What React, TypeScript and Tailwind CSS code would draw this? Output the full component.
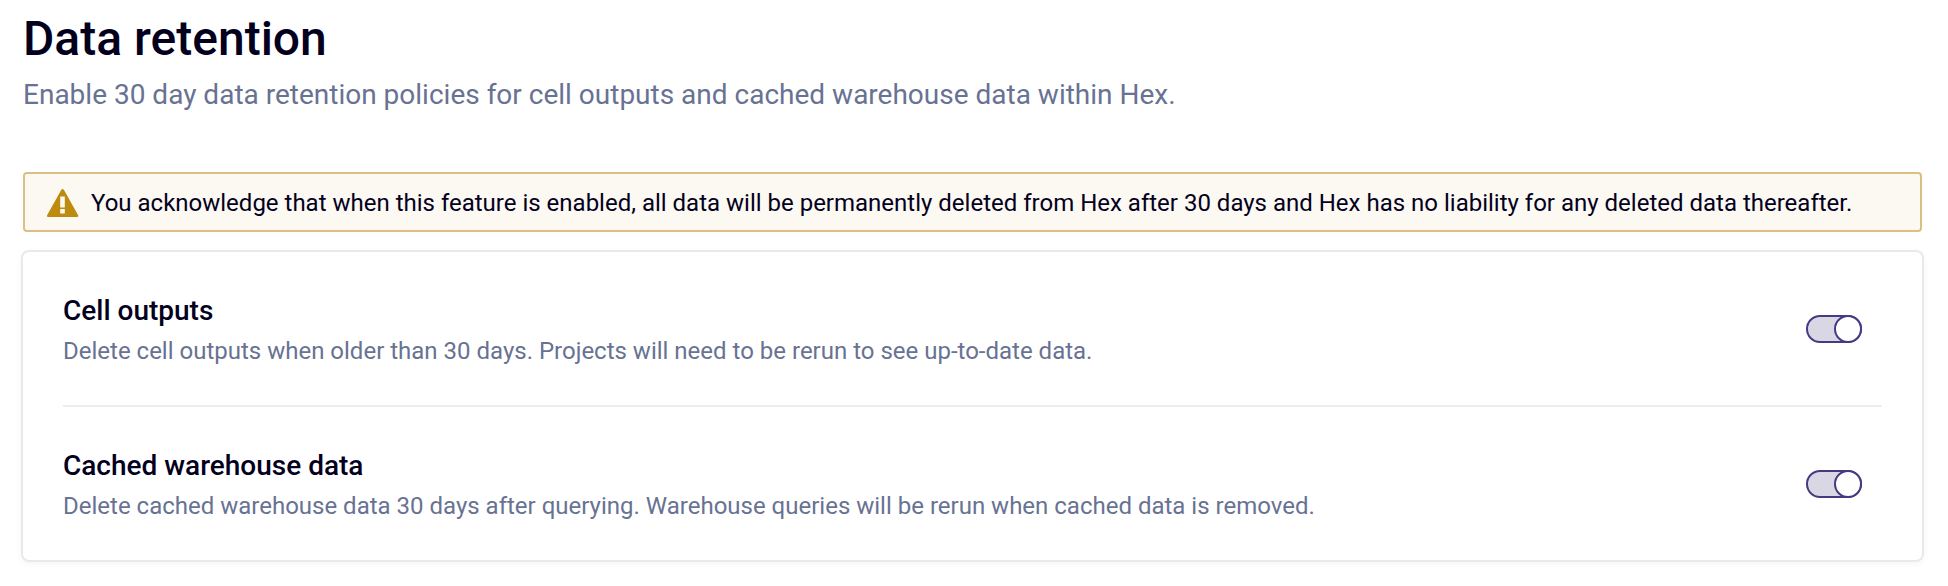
import { useState } from "react";

interface RetentionSetting {
  id: string;
  title: string;
  description: string;
}

const settings: RetentionSetting[] = [
  {
    id: "cell-outputs",
    title: "Cell outputs",
    description:
      "Delete cell outputs when older than 30 days. Projects will need to be rerun to see up-to-date data.",
  },
  {
    id: "cached-warehouse-data",
    title: "Cached warehouse data",
    description:
      "Delete cached warehouse data 30 days after querying. Warehouse queries will be rerun when cached data is removed.",
  },
];

function WarningIcon() {
  return (
    <svg viewBox="0 0 32 28" className="h-7 w-8 shrink-0" aria-hidden="true">
      <path
        d="M14.2 0.9 Q15.6 -0.8 17 0.9 L31 26 Q31.8 28 30.2 28 H1 Q-0.4 28 0.2 26 Z"
        fill="#bd8b0e"
      />
      <path d="M13.2 7.5h4.6v11h-4.6zM13.2 20h4.6v4.4h-4.6z" fill="#fcf9f2" />
    </svg>
  );
}

function SettingRow({ setting }: { setting: RetentionSetting }) {
  const [enabled, setEnabled] = useState(true);

  return (
    <div className="flex items-center justify-between gap-8 py-9 pr-5">
      <div>
        <label htmlFor={setting.id} className="block text-[28px] leading-[45px] font-medium text-[#03001d]">
          {setting.title}
        </label>
        <p id={`${setting.id}-description`} className="text-2xl leading-9 text-[#687292]">
          {setting.description}
        </p>
      </div>

      <input
        id={setting.id}
        type="checkbox"
        role="switch"
        aria-describedby={`${setting.id}-description`}
        checked={enabled}
        onChange={(e) => setEnabled(e.target.checked)}
        className="relative h-7 w-14 shrink-0 cursor-pointer appearance-none rounded-full border-2 border-[#473982] bg-white before:absolute before:-top-0.5 before:-left-0.5 before:size-7 before:rounded-full before:border-2 before:border-[#473982] before:bg-white checked:bg-[#dad7e5] checked:before:left-[26px]"
      />
    </div>
  );
}

export default function App() {
  return (
    <main className="bg-white pt-3 pr-6 pb-6 pl-[21px] font-['Roboto',sans-serif]">
      {/* Heading */}
      <header className="px-0.5">
        <h1 className="text-5xl leading-[54px] font-medium text-[#03001d]">Data retention</h1>
        <p className="mt-2 text-[28px] leading-[42px] text-[#687292]">
          Enable 30 day data retention policies for cell outputs and cached warehouse data within Hex.
        </p>
      </header>

      {/* Warning */}
      <div
        role="note"
        className="mx-0.5 mt-14 flex items-center gap-3 rounded border-2 border-[#dcbf82] bg-[#fcf9f2] px-[22px] pt-3 pb-2.5"
      >
        <WarningIcon />
        <p className="text-2xl leading-[34px] text-[#03001d]">
          You acknowledge that when this feature is enabled, all data will be permanently deleted from Hex after 30 days
          and Hex has no liability for any deleted data thereafter.
        </p>
      </div>

      {/* Settings */}
      <section className="mt-[18px] divide-y-2 divide-[#ececf2] rounded-lg border-2 border-[#e9e9ea] px-10 shadow-[0_2px_6px_rgba(0,0,0,0.04)]">
        {settings.map((setting) => (
          <SettingRow key={setting.id} setting={setting} />
        ))}
      </section>
    </main>
  );
}
